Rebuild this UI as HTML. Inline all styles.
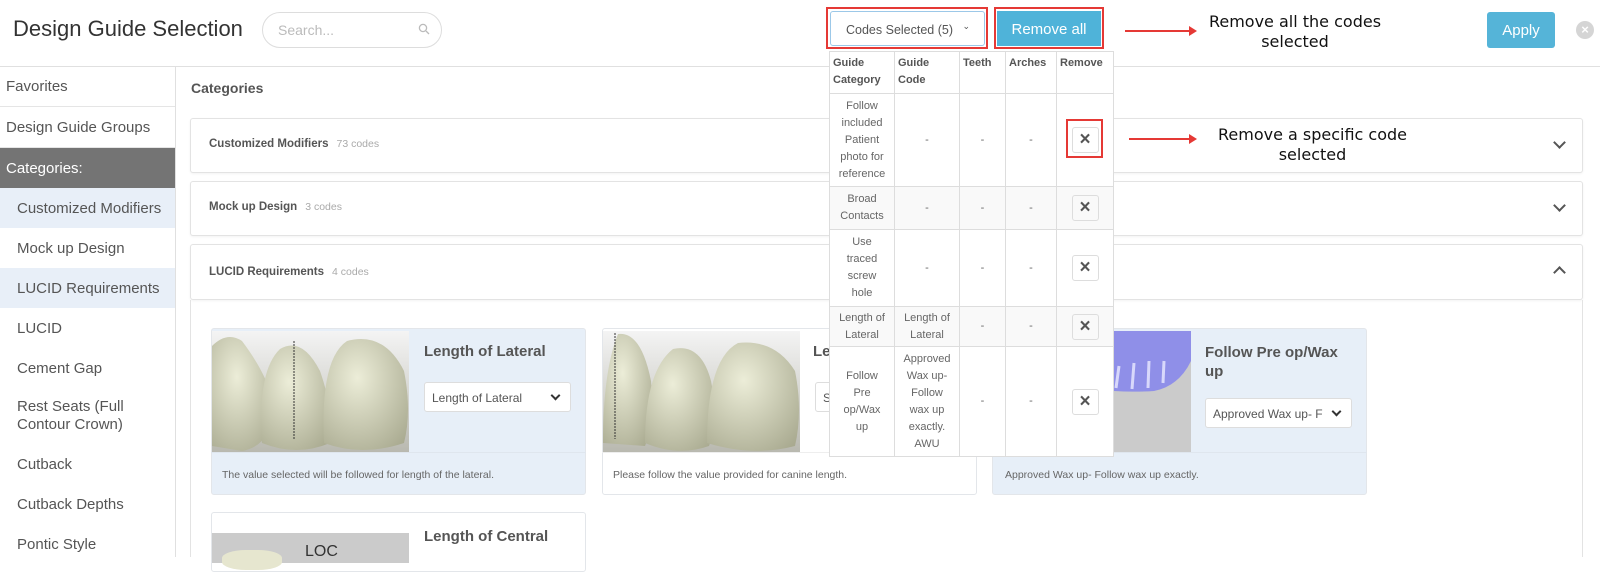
<!DOCTYPE html>
<html><head><meta charset="utf-8"><style>
*{box-sizing:border-box;margin:0;padding:0}
body{width:1600px;height:557px;overflow:hidden;background:#fff;font-family:"Liberation Sans",sans-serif;color:#555;position:relative}
.a{position:absolute}
.side div{position:absolute;left:0;width:175px;font-size:15px;color:#555;display:flex;align-items:center}
.panel{position:absolute;left:190px;width:1393px;border:1px solid #e3e3e3;border-radius:3px;background:#fff;box-shadow:0 1px 2px rgba(0,0,0,.05)}
.panel b{position:absolute;left:18px;font-size:11.5px;color:#555}
.panel span{font-size:10.5px;color:#aaa;font-weight:normal;margin-left:8px}
.card{position:absolute;border:1px solid #e3e6ea;border-radius:3px}
.sel{position:absolute;background:#fff;border:1px solid #ddd;border-radius:3px;font-size:12px;color:#555;padding:8px 7px;height:30px;width:147px}
.sel:after{content:"";position:absolute;right:11px;top:9px;width:5px;height:5px;border-right:2px solid #333;border-bottom:2px solid #333;transform:rotate(45deg)}
.ttl{position:absolute;font-weight:bold;font-size:15px;color:#555}
.foot{position:absolute;font-size:10.5px;color:#666}
table{position:absolute;left:829px;top:51px;width:285px;border-collapse:collapse;background:#fff;font-size:11px;color:#666;text-align:center}
td,th{border:1px solid #ddd;padding:0 3px;line-height:17px}
th{font-size:11px;color:#555;text-align:left;vertical-align:top;padding-top:3px}
.x{display:inline-block;width:27px;height:26px;border:1px solid #ddd;border-radius:3px;font-size:19px;line-height:24px;color:#555;font-weight:bold}
.ann{position:absolute;font-family:"DejaVu Sans",sans-serif;font-size:16px;color:#111;text-align:center;line-height:20px}
.arr{position:absolute;height:2px;background:#e53935}
.arr:after{content:"";position:absolute;right:-2px;top:-4px;border-left:8px solid #e53935;border-top:5px solid transparent;border-bottom:5px solid transparent}
.chev{position:absolute;width:9px;height:9px;border-right:2px solid #555;border-bottom:2px solid #555}
</style></head><body>
<div class="a" style="left:13px;top:16px;font-size:22px;color:#333">Design Guide Selection</div>
<div class="a" style="left:262px;top:12px;width:180px;height:36px;border:1px solid #ddd;border-radius:18px;font-size:14px;color:#bbb;padding:9px 15px">Search...</div>
<svg class="a" style="left:418px;top:23px" width="12" height="12"><circle cx="5" cy="5" r="3.6" fill="none" stroke="#bbb" stroke-width="1.3"/><path d="M8 8l3 3" stroke="#bbb" stroke-width="1.3"/></svg>
<div class="a" style="left:0;top:66px;width:1600px;height:1px;background:#e0e0e0"></div>

<div class="a" style="left:826px;top:7px;width:162px;height:42px;border:2px solid #e53935"></div>
<div class="a" style="left:830px;top:11px;width:155px;height:35px;border:1px solid #9cc8e8;border-radius:3px;background:#fff;font-size:12.5px;color:#555;padding:11px 0 0 15px">Codes Selected (5)<span style="position:absolute;right:14px;top:9px;font-size:9px">&#8964;</span></div>
<div class="a" style="left:994px;top:7px;width:110px;height:42px;border:2px solid #e53935"></div>
<div class="a" style="left:997px;top:11px;width:104px;height:35px;background:#4fb3d9;color:#fff;font-size:15px;text-align:center;line-height:37px">Remove all</div>
<div class="arr" style="left:1125px;top:30px;width:70px"></div>
<div class="ann" style="left:1195px;top:12px;width:200px">Remove all the codes<br>selected</div>
<div class="a" style="left:1487px;top:12px;width:68px;height:36px;background:#55b4d8;border-radius:3px;color:#fff;font-size:15px;text-align:center;line-height:37px">Apply</div>
<div class="a" style="left:1576px;top:21px;width:18px;height:18px;border-radius:50%;background:#d5d5d5;color:#fff;font-size:13px;font-weight:bold;text-align:center;line-height:18px">×</div>

<div class="a" style="left:175px;top:66px;width:1px;height:491px;background:#e0e0e0"></div>
<div class="side">
<div style="top:66px;height:41px;padding-left:6px;border-bottom:1px solid #e5e5e5">Favorites</div>
<div style="top:107px;height:41px;padding-left:6px;border-bottom:1px solid #e5e5e5">Design Guide Groups</div>
<div style="top:148px;height:40px;padding-left:6px;background:#747474;color:#fff">Categories:</div>
<div style="top:188px;height:40px;padding-left:17px;background:#e8eff8">Customized Modifiers</div>
<div style="top:228px;height:40px;padding-left:17px">Mock up Design</div>
<div style="top:268px;height:40px;padding-left:17px;background:#e8eff8">LUCID Requirements</div>
<div style="top:308px;height:40px;padding-left:17px">LUCID</div>
<div style="top:348px;height:40px;padding-left:17px">Cement Gap</div>
<div style="top:388px;height:56px;padding-left:17px;line-height:18px">Rest Seats (Full<br>Contour Crown)</div>
<div style="top:444px;height:40px;padding-left:17px">Cutback</div>
<div style="top:484px;height:40px;padding-left:17px">Cutback Depths</div>
<div style="top:524px;height:40px;padding-left:17px">Pontic Style</div>
</div>

<div class="a" style="left:191px;top:80px;font-size:14px;font-weight:bold;color:#555">Categories</div>
<div class="panel" style="top:118px;height:55px"><b style="top:19px">Customized Modifiers<span>73 codes</span></b></div>
<div class="chev" style="left:1555px;top:138px;transform:rotate(45deg)"></div>
<div class="panel" style="top:181px;height:55px"><b style="top:19px">Mock up Design<span>3 codes</span></b></div>
<div class="chev" style="left:1555px;top:201px;transform:rotate(45deg)"></div>
<div class="panel" style="top:244px;height:56px"><b style="top:21px">LUCID Requirements<span>4 codes</span></b></div>
<div class="chev" style="left:1555px;top:268px;transform:rotate(-135deg)"></div>
<div class="a" style="left:190px;top:300px;width:1393px;height:257px;border-left:1px solid #e3e3e3;border-right:1px solid #e3e3e3"></div>

<!-- card 1 -->
<div class="card" style="left:211px;top:328px;width:375px;height:167px;background:#e7eff8"></div>
<svg class="a" style="left:212px;top:331px" width="197" height="121">
<defs><linearGradient id="g" x1="0" y1="0" x2="0" y2="1"><stop offset="0" stop-color="#f4f4f4"/><stop offset="1" stop-color="#b9b9b0"/></linearGradient>
<radialGradient id="t" cx=".4" cy=".35" r=".8"><stop offset="0" stop-color="#ecedd8"/><stop offset="1" stop-color="#a9aa90"/></radialGradient></defs>
<rect width="197" height="121" fill="url(#g)"/>
<path d="M0 115 L0 15 Q15 0 30 10 Q60 50 62 80 Q58 115 30 120 Z" fill="url(#t)"/>
<path d="M50 112 Q45 40 68 18 Q90 5 108 40 Q122 80 118 112 Q85 126 50 112Z" fill="url(#t)"/>
<path d="M112 112 Q108 28 135 10 Q172 0 192 40 Q200 80 192 112 Q150 126 112 112Z" fill="url(#t)"/>
<path d="M82 10 V108" stroke="#333" stroke-dasharray="2 1"/>
</svg>
<div class="ttl" style="left:424px;top:343px">Length of Lateral</div>
<div class="sel" style="left:424px;top:382px">Length of Lateral</div>
<div class="a" style="left:211px;top:452px;width:375px;height:1px;background:#dfe6ee"></div>
<div class="foot" style="left:222px;top:469px">The value selected will be followed for length of the lateral.</div>

<!-- card 2 -->
<div class="card" style="left:602px;top:328px;width:375px;height:167px;background:#fff"></div>
<svg class="a" style="left:603px;top:331px" width="197" height="121">
<rect width="197" height="121" fill="url(#g)"/>
<path d="M0 112 Q0 40 15 3 Q38 0 48 50 Q52 90 42 115Z" fill="url(#t)"/>
<path d="M42 112 Q42 40 70 18 Q98 12 108 50 Q116 90 106 115 Q75 126 42 112Z" fill="url(#t)"/>
<path d="M104 112 Q104 28 135 12 Q172 8 192 40 Q200 80 192 115 Q150 126 104 112Z" fill="url(#t)"/>
<path d="M12 2 V108" stroke="#333" stroke-dasharray="2 1"/>
</svg>
<div class="ttl" style="left:813px;top:343px">Le</div>
<div class="sel" style="left:815px;top:382px">S</div>
<div class="a" style="left:602px;top:452px;width:375px;height:1px;background:#eee"></div>
<div class="foot" style="left:613px;top:469px">Please follow the value provided for canine length.</div>

<!-- card 3 -->
<div class="card" style="left:992px;top:328px;width:375px;height:167px;background:#e7eff8"></div>
<svg class="a" style="left:994px;top:331px" width="197" height="121">
<rect width="197" height="121" fill="#cbcbcb"/>
<path d="M100 0 H197 V30 Q185 55 160 60 Q130 62 100 58Z" fill="#8f8fe8"/>
<path d="M125 35 L122 57 M140 32 L138 58 M155 30 L154 57 M170 30 L169 52" stroke="#d8d8fb" stroke-width="3"/>
</svg>
<div class="ttl" style="left:1205px;top:343px;line-height:19px">Follow Pre op/Wax<br>up</div>
<div class="sel" style="left:1205px;top:398px">Approved Wax up- F</div>
<div class="a" style="left:992px;top:452px;width:375px;height:1px;background:#dfe6ee"></div>
<div class="foot" style="left:1005px;top:469px">Approved Wax up- Follow wax up exactly.</div>

<!-- card 4 -->
<div class="card" style="left:211px;top:512px;width:375px;height:60px;background:#fff"></div>
<div class="a" style="left:212px;top:533px;width:197px;height:30px;background:#cbcbcb"></div>
<div class="a" style="left:305px;top:543px;font-size:16px;color:#333">LOC</div>
<div class="a" style="left:222px;top:550px;width:60px;height:20px;background:#e6e6cf;border-radius:40%"></div>
<div class="ttl" style="left:424px;top:528px">Length of Central</div>

<table>
<tr style="height:42px"><th style="width:65px">Guide<br>Category</th><th style="width:65px">Guide<br>Code</th><th style="width:46px">Teeth</th><th style="width:51px">Arches</th><th>Remove</th></tr>
<tr style="height:93px"><td>Follow<br>included<br>Patient<br>photo for<br>reference</td><td>-</td><td>-</td><td>-</td><td><span class="x">×</span></td></tr>
<tr style="height:43px;background:#f9f9f9"><td>Broad<br>Contacts</td><td>-</td><td>-</td><td>-</td><td><span class="x">×</span></td></tr>
<tr style="height:77px"><td>Use<br>traced<br>screw<br>hole</td><td>-</td><td>-</td><td>-</td><td><span class="x">×</span></td></tr>
<tr style="height:40px;background:#f9f9f9"><td>Length of<br>Lateral</td><td>Length of<br>Lateral</td><td>-</td><td>-</td><td><span class="x">×</span></td></tr>
<tr style="height:110px"><td>Follow<br>Pre<br>op/Wax<br>up</td><td>Approved<br>Wax up-<br>Follow<br>wax up<br>exactly.<br>AWU</td><td>-</td><td>-</td><td><span class="x">×</span></td></tr>
</table>
<div class="a" style="left:1066px;top:119px;width:37px;height:39px;border:2px solid #e53935"></div>
<div class="arr" style="left:1129px;top:138px;width:66px"></div>
<div class="ann" style="left:1200px;top:125px;width:225px">Remove a specific code<br>selected</div>
</body></html>
